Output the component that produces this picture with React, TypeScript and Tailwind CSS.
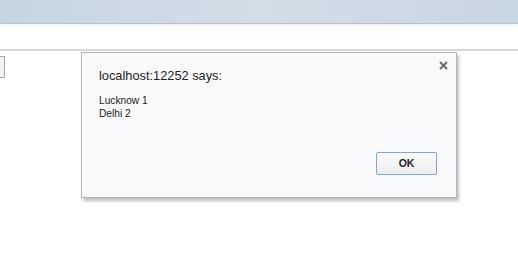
import React from "react";

const sans = { fontFamily: '"Liberation Sans", Arial, sans-serif' };

function AlertDialog() {
  return (
    <div
      className="absolute left-[81px] top-[52px] w-[376px] h-[146px] border border-[#b4b4b4] bg-[#f9fafb] shadow-[2px_3px_3px_rgba(0,0,0,0.25)] flex flex-col"
      style={sans}
    >
      <div className="flex justify-between items-start pl-[17px] pr-[8px] pt-[8px]">
        <div className="text-[12.8px] leading-[18px] text-[#222] mt-[6px]">localhost:12252 says:</div>
        <svg width="9" height="9" viewBox="0 0 9 9">
          <path d="M1 1L8 8M8 1L1 8" stroke="#6b6b6b" strokeWidth="2" />
        </svg>
      </div>
      <div className="pl-[17px] pt-[9px] text-[10.2px] leading-[13px] text-[#222]">
        <div>Lucknow 1</div>
        <div>Delhi 2</div>
      </div>
      <div className="flex-1" />
      <div className="flex justify-end pr-[19px] pb-[22px]">
        <button className="w-[61px] h-[23px] rounded-[2px] border border-[#7ea4dc] bg-gradient-to-b from-[#fbfbfb] to-[#eeeeee] text-[10.5px] font-bold text-[#222] flex items-center justify-center">
          OK
        </button>
      </div>
    </div>
  );
}

export default function App() {
  return (
    <div className="relative w-[518px] h-[272px] bg-white overflow-hidden">
      <div className="h-[24px] bg-gradient-to-r from-[#c6d4e2] via-[#d3dde8] to-[#c8d5e2] border-b border-[#b9c3cc]" />
      <div className="h-[2px] bg-[#f2f4f6]" />
      <div className="h-[25px] bg-white border-b-2 border-[#d7d7d7]" />
      <div className="pt-[5px]">
        <div className="w-[5px] h-[22px] border border-l-0 border-[#a9a9a9] bg-[#f2f2f2]" />
      </div>
      <AlertDialog />
    </div>
  );
}
